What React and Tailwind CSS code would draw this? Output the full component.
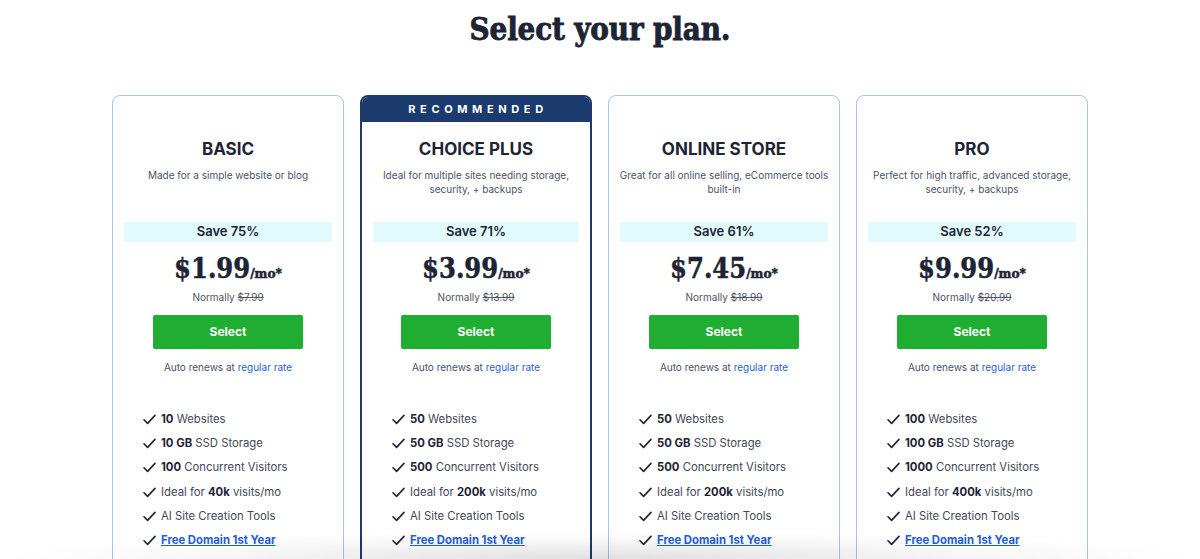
import React from "react";

const sans = { fontFamily: "Inter, 'Open Sans', sans-serif" };
const serif = { fontFamily: "'DejaVu Serif Condensed', 'DejaVu Serif', serif" };

const plans = [
  {
    name: "BASIC",
    desc: "Made for a simple website or blog",
    save: "Save 75%",
    price: "$1.99",
    normal: "$7.99",
    sites: "10",
    storage: "10 GB",
    visitors: "100",
    visits: "40k",
  },
  {
    name: "CHOICE PLUS",
    desc: "Ideal for multiple sites needing storage, security, + backups",
    save: "Save 71%",
    price: "$3.99",
    normal: "$13.99",
    sites: "50",
    storage: "50 GB",
    visitors: "500",
    visits: "200k",
    recommended: true,
  },
  {
    name: "ONLINE STORE",
    desc: "Great for all online selling, eCommerce tools built-in",
    save: "Save 61%",
    price: "$7.45",
    normal: "$18.99",
    sites: "50",
    storage: "50 GB",
    visitors: "500",
    visits: "200k",
  },
  {
    name: "PRO",
    desc: "Perfect for high traffic, advanced storage, security, + backups",
    save: "Save 52%",
    price: "$9.99",
    normal: "$20.99",
    sites: "100",
    storage: "100 GB",
    visitors: "1000",
    visits: "400k",
  },
];

function Check() {
  return (
    <svg width="13" height="11" viewBox="0 0 13 11" fill="none" className="shrink-0">
      <path d="M1 5.8 L4.6 9.4 L12 1.4" stroke="#1d2433" strokeWidth="1.6" strokeLinecap="round" strokeLinejoin="round" />
    </svg>
  );
}

function Feature({ children }) {
  return (
    <li className="flex items-center gap-[5px] h-[24.3px] text-[11.3px] text-[#414858]">
      <Check />
      <span>{children}</span>
    </li>
  );
}

function Card({ p }) {
  return (
    <div
      className={
        "flex flex-col rounded-[8px] bg-white overflow-hidden h-[480px] " +
        (p.recommended ? "border-2 border-[#1b3a6d]" : "border border-[#a3c6f4]")
      }
    >
      {p.recommended ? (
        <div className="h-[25px] bg-[#1b3a6d] text-white text-[11px] font-bold tracking-[0.42em] flex items-center justify-center pl-[4px]">
          RECOMMENDED
        </div>
      ) : (
        <div className="h-[26px]" />
      )}
      <div className="flex flex-col items-center px-[11px]">
        <div className="mt-[16px] h-[22px] leading-[22px] text-[17px] font-bold text-[#1d2433]">{p.name}</div>
        <div className="mt-[8px] h-[28px] w-[224px] shrink-0 text-[10px] leading-[14px] text-[#4b5365] text-center">{p.desc}</div>
        <div className="mt-[26px] w-full h-[20px] bg-[#e1fbfd] flex items-center justify-center text-[13px] font-semibold text-[#1d2433]">
          {p.save}
        </div>
        <div className="mt-[11px] h-[32px] flex items-end text-[#1d2433] [-webkit-text-stroke:0.5px_#1d2433]" style={serif}>
          <span className="text-[27px] font-bold leading-[32px]">{p.price}</span>
          <span className="text-[13.5px] font-bold leading-[24px]">/mo*</span>
        </div>
        <div className="mt-[5px] h-[14px] leading-[14px] text-[10px] text-[#4b5365]">
          Normally <span className="line-through">{p.normal}</span>
        </div>
        <button className="mt-[11px] w-[150px] h-[34px] rounded-[2px] bg-[#1fae31] text-white text-[12px] font-bold">
          Select
        </button>
        <div className="mt-[11px] h-[14px] leading-[14px] text-[10px] text-[#4b5365]">
          Auto renews at <span className="text-[#1f5fd6]">regular rate</span>
        </div>
      </div>
      <ul className="mt-[33px] pl-[30px] flex flex-col">
        <Feature>
          <b className="font-bold text-[#1d2433]">{p.sites}</b> Websites
        </Feature>
        <Feature>
          <b className="font-bold text-[#1d2433]">{p.storage}</b> SSD Storage
        </Feature>
        <Feature>
          <b className="font-bold text-[#1d2433]">{p.visitors}</b> Concurrent Visitors
        </Feature>
        <Feature>
          Ideal for <b className="font-bold text-[#1d2433]">{p.visits}</b> visits/mo
        </Feature>
        <Feature>AI Site Creation Tools</Feature>
        <Feature>
          <span className="text-[#1f5fd6] font-bold underline">Free Domain 1st Year</span>
        </Feature>
      </ul>
    </div>
  );
}

export default function App() {
  return (
    <div className="relative w-[1200px] h-[559px] overflow-hidden bg-white" style={sans}>
      <h1
        className="pt-[6px] h-[95px] text-center text-[31px] font-bold text-[#1d2433] tracking-[-0.005em] [-webkit-text-stroke:0.8px_#1d2433]"
        style={serif}
      >
        Select your plan.
      </h1>
      <div className="mx-auto w-[976px] grid grid-cols-4 gap-4">
        {plans.map((p) => (
          <Card key={p.name} p={p} />
        ))}
      </div>
      <div className="pointer-events-none absolute left-0 right-0 bottom-0 h-[28px] bg-[radial-gradient(ellipse_50%_100%_at_50%_100%,rgba(0,0,0,0.12),rgba(0,0,0,0.04)_60%,transparent_100%)]" />
    </div>
  );
}
